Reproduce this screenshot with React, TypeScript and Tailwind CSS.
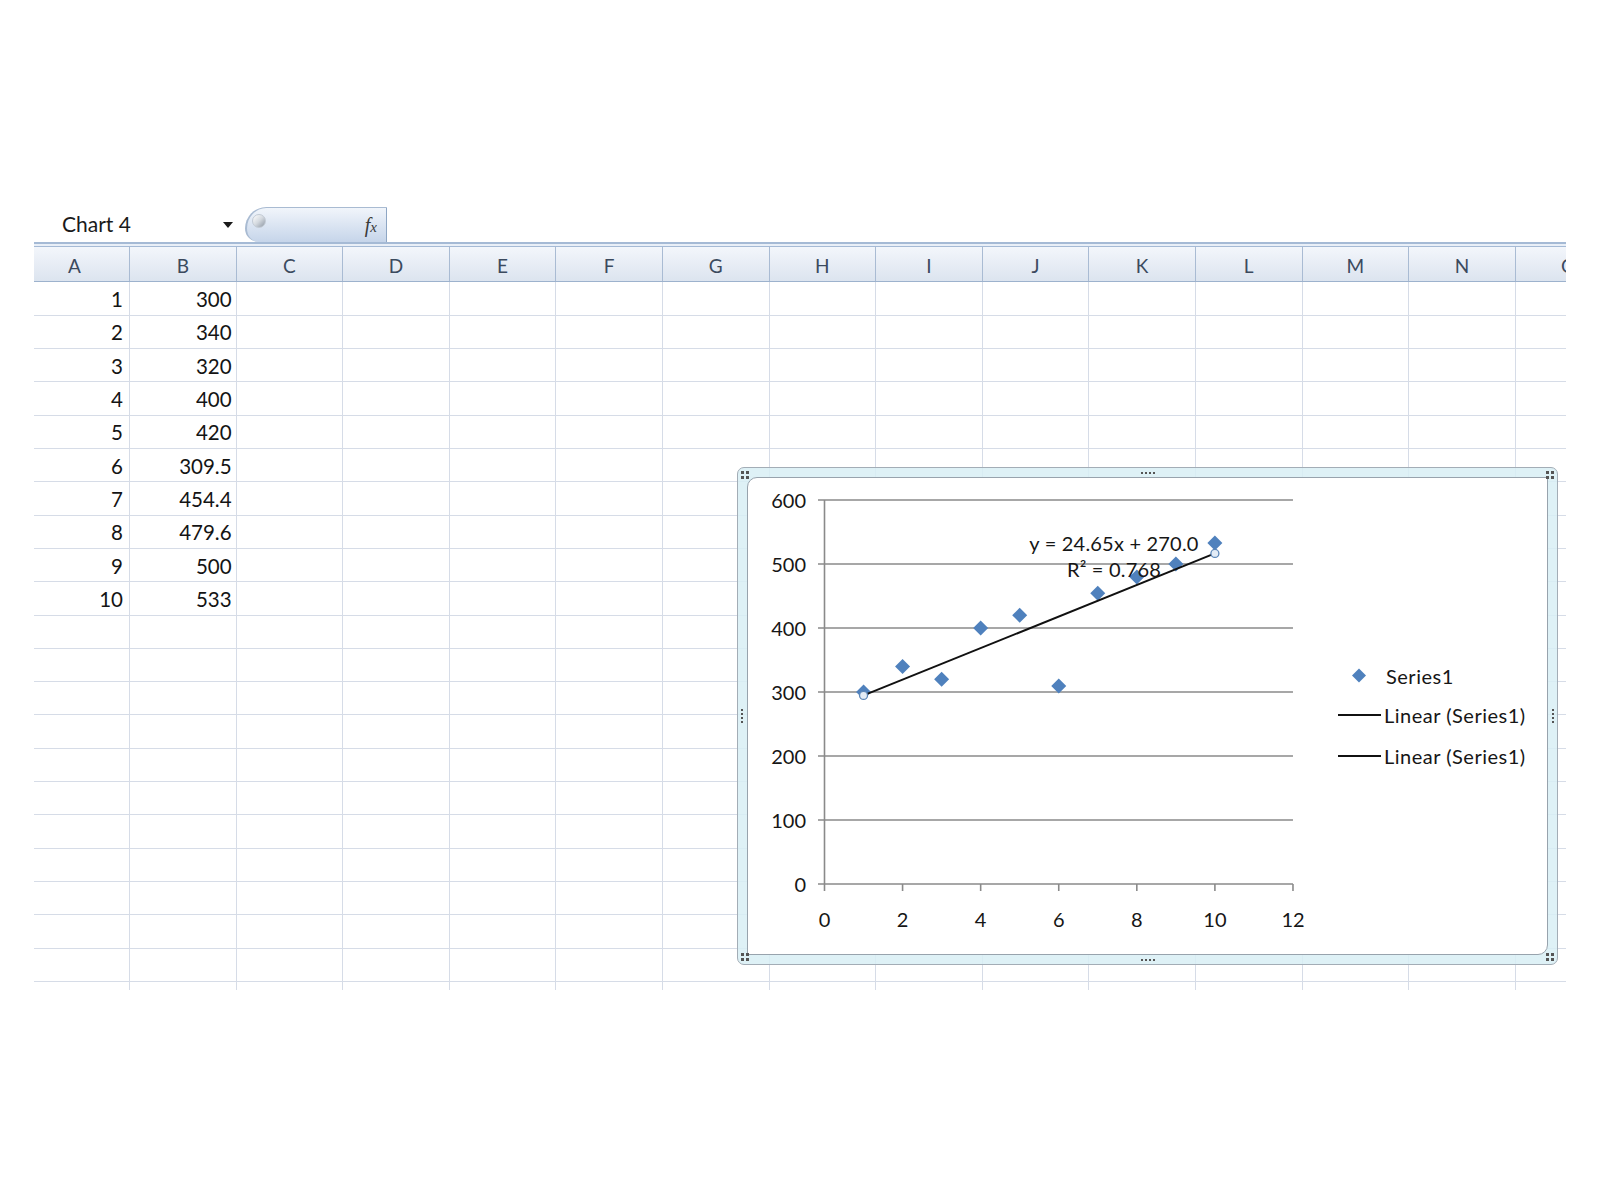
import { ReactNode } from 'react';

const COLUMNS = ['A', 'B', 'C', 'D', 'E', 'F', 'G', 'H', 'I', 'J', 'K', 'L', 'M', 'N', 'O'];
const VALUES = [300, 340, 320, 400, 420, 309.5, 454.4, 479.6, 500, 533];
const ROW_COUNT = 21;

const gridCols = 'grid grid-cols-[96px_repeat(14,106.6px)]';

// chart scale, in px of the plot box
const px = (u: number) => 76.5 + u * 39.04;
const py = (v: number) => 406 - v * 0.64;

function FormulaBar() {
  return (
    <div className="flex h-[37px] items-end">
      <div className="flex h-full w-[211px] items-center justify-between pl-[28px] pr-[12px]">
        <span className="text-[21px] text-[#1a1a1a]">Chart 4</span>
        <span className="mt-[2px] h-0 w-0 border-x-[5px] border-t-[6px] border-x-transparent border-t-[#1a1a1a]" />
      </div>
      <div className="relative flex h-[35px] w-[142px] items-center justify-end rounded-tl-[22px] rounded-bl-[14px] border-l-2 border-t border-r border-[#a9bbd2] border-r-[#8ea6c4] bg-gradient-to-b from-[#f1f5fb] to-[#c6d5ea] pr-[9px]">
        <span className="absolute left-[5px] top-[6px] h-[14px] w-[14px] rounded-full border border-[#c2cad4] bg-gradient-to-br from-white via-[#d4d9df] to-[#8e98a4]" />
        <span className="font-['Liberation_Serif',serif] text-[20px] italic text-[#3a3a3a]">
          f<span className="text-[15px]">x</span>
        </span>
      </div>
    </div>
  );
}

function HeaderRow() {
  return (
    <div className={`${gridCols} h-[35px] border-b border-[#9db2cd] bg-gradient-to-b from-[#f3f6fb] to-[#dce4ef]`}>
      {COLUMNS.map(c => (
        <div
          key={c}
          className={`flex items-center justify-center border-r border-[#a9bbd3] pt-[4px] text-[19px] text-[#3b4a5e] ${c === 'A' ? 'pr-[14px]' : ''}`}>
          {c}
        </div>
      ))}
    </div>
  );
}

function Cell({ children, className }: { children?: ReactNode; className?: string }) {
  return (
    <div className={`flex items-center justify-end border-r border-b border-[#d6dce7] pt-[2px] text-[20.5px] text-[#141414] ${className ?? ''}`}>
      {children}
    </div>
  );
}

function Rows() {
  return (
    <div>
      {Array.from({ length: ROW_COUNT }, (_, i) => (
        <div key={i} className={`${gridCols} h-[33.33px]`}>
          <Cell className="pr-[6px]">{i < VALUES.length ? i + 1 : null}</Cell>
          <Cell className="pr-[4px]">{i < VALUES.length ? VALUES[i] : null}</Cell>
          {COLUMNS.slice(2).map(c => (
            <Cell key={c} />
          ))}
        </div>
      ))}
      <div className={`${gridCols} h-[8px]`}>
        {COLUMNS.map(c => (
          <div key={c} className="border-r border-[#d6dce7]" />
        ))}
      </div>
    </div>
  );
}

function Dots({ vertical, className }: { vertical?: boolean; className: string }) {
  return (
    <div className={`absolute flex gap-[2px] ${vertical ? 'flex-col' : ''} ${className}`}>
      {[0, 1, 2, 3].map(i => (
        <span key={i} className="h-[2px] w-[2px] bg-[#555]" />
      ))}
    </div>
  );
}

function Corner({ className }: { className: string }) {
  return (
    <div className={`absolute grid grid-cols-2 gap-[2px] ${className}`}>
      {[0, 1, 2, 3].map(i => (
        <span key={i} className="h-[3px] w-[3px] bg-[#555]" />
      ))}
    </div>
  );
}

function Diamond({ x, y, r = 7.5 }: { x: number; y: number; r?: number }) {
  return <polygon points={`${x},${y - r} ${x + r},${y} ${x},${y + r} ${x - r},${y}`} fill="#4f81bd" />;
}

function ScatterChart() {
  const ticksY = [0, 100, 200, 300, 400, 500, 600];
  const ticksX = [0, 2, 4, 6, 8, 10, 12];
  const trend = (u: number) => 24.65 * u + 270;
  const label = { fontSize: 20, fill: '#161616' };

  return (
    <div className="absolute left-[737px] top-[467px] h-[498px] w-[821px] rounded-[7px] border border-[#a3adb6] bg-[#d8eef4]/85 p-[9px]">
      <div className="h-full w-full rounded-tl-[10px] rounded-br-[10px] border border-[#98a3ad] bg-white">
        <svg width="799" height="476" className="block font-['Lato',sans-serif]">
          {ticksY.map(v => (
            <g key={v}>
              <line x1={70} x2={px(12)} y1={py(v)} y2={py(v)} stroke="#8a8a8a" strokeWidth={1.6} />
              <text x={58} y={py(v)} textAnchor="end" dominantBaseline="central" {...label}>
                {v}
              </text>
            </g>
          ))}
          <line x1={px(0)} x2={px(0)} y1={py(600)} y2={py(0)} stroke="#8a8a8a" strokeWidth={1.6} />
          {ticksX.map(u => (
            <g key={u}>
              <line x1={px(u)} x2={px(u)} y1={py(0)} y2={py(0) + 7} stroke="#8a8a8a" strokeWidth={1.6} />
              <text x={px(u)} y={441} textAnchor="middle" dominantBaseline="central" {...label}>
                {u}
              </text>
            </g>
          ))}

          {VALUES.map((v, i) => (
            <Diamond key={i} x={px(i + 1)} y={py(v)} />
          ))}

          <line x1={px(1)} y1={py(trend(1))} x2={px(10)} y2={py(trend(10))} stroke="#111" strokeWidth={2} />
          <circle cx={px(1)} cy={py(trend(1))} r={4} fill="#e3ecf6" stroke="#5b86b8" strokeWidth={1.3} />
          <circle cx={px(10)} cy={py(trend(10))} r={4} fill="#e3ecf6" stroke="#5b86b8" strokeWidth={1.3} />

          <text x={366} y={65} textAnchor="middle" dominantBaseline="central" {...label} letterSpacing={0.2}>
            y = 24.65x + 270.0
          </text>
          <text x={366} y={91} textAnchor="middle" dominantBaseline="central" {...label} letterSpacing={0.2}>
            R² = 0.768
          </text>

          <Diamond x={611} y={197.5} r={7} />
          <text x={638} y={197.5} dominantBaseline="central" {...label} letterSpacing={0.5}>
            Series1
          </text>
          {[237, 278].map(y => (
            <g key={y}>
              <line x1={590} x2={633} y1={y} y2={y} stroke="#111" strokeWidth={1.8} />
              <text x={636} y={y} dominantBaseline="central" {...label} letterSpacing={0.5}>
                Linear (Series1)
              </text>
            </g>
          ))}
        </svg>
      </div>

      <Dots className="left-1/2 top-[4px] -translate-x-1/2" />
      <Dots className="bottom-[3px] left-1/2 -translate-x-1/2" />
      <Dots vertical className="left-[3px] top-1/2 -translate-y-1/2" />
      <Dots vertical className="right-[3px] top-1/2 -translate-y-1/2" />
      <Corner className="left-[3px] top-[3px]" />
      <Corner className="right-[3px] top-[3px]" />
      <Corner className="bottom-[3px] left-[3px]" />
      <Corner className="bottom-[3px] right-[3px]" />
    </div>
  );
}

export default function App() {
  return (
    <div className="relative min-h-[1200px] w-[1600px] bg-white font-['Lato',sans-serif]">
      <div className="pl-[34px] pt-[205px]">
        <div className="w-[1532px] overflow-hidden">
          <FormulaBar />
          <div className="h-[5px] border-t-2 border-b border-[#a5bad5] bg-[#e9eff7]" />
          <HeaderRow />
          <Rows />
        </div>
      </div>
      <ScatterChart />
    </div>
  );
}
